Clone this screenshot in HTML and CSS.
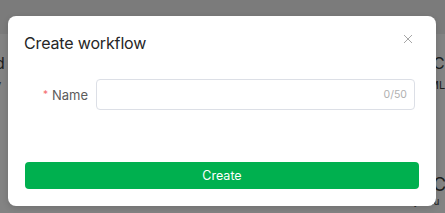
FILE: index.html
```html
<!DOCTYPE html>
<html>
<head>
<meta charset="utf-8">
<link rel="stylesheet" href="styles.css">
</head>
<body>
<div class="page">
  <div class="topbar"></div>
  <div class="content">
    <div class="col col-left">
      <div class="bg-title">d</div>
      <div class="bg-sub">y</div>
    </div>
    <div class="col col-right">
      <div class="bg-title">C</div>
      <div class="bg-sub">ML</div>
      <div class="bg-title big">C</div>
      <div class="bg-edited">Edited by:&nbsp; hu</div>
    </div>
  </div>
</div>
<div class="modal">
  <div class="modal-header">
    <div class="modal-title">Create workflow</div>
    <svg class="close" width="10" height="10" viewBox="0 0 10 10"><path d="M1 1L9 9M9 1L1 9" stroke="#a6a6a6" stroke-width="1" fill="none"/></svg>
  </div>
  <div class="form-row">
    <label class="label"><span class="req">*</span>Name</label>
    <div class="input">
      <span class="count">0/50</span>
    </div>
  </div>
  <button class="btn">Create</button>
</div>
</body>
</html>
```
FILE: styles.css
```css
html, body {
  margin: 0;
  padding: 0;
}
body {
  width: 445px;
  height: 213px;
  overflow: hidden;
  position: relative;
  background: #838383;
  font-family: Inter, "Liberation Sans", sans-serif;
}
.page {
  display: flex;
  flex-direction: column;
  height: 213px;
}
.topbar {
  height: 34px;
  background: #7b7b7b;
}
.content {
  flex: 1;
  display: flex;
  justify-content: space-between;
  color: #1e1e1e;
}
.col-left {
  padding-top: 20px;
  margin-left: -5px;
}
.col-right {
  padding-top: 20px;
  width: 10px;
  overflow: visible;
  margin-right: 0;
  white-space: nowrap;
  position: relative;
}
.bg-title {
  font-size: 16px;
  line-height: 18px;
}
.bg-sub {
  font-size: 11px;
  line-height: 14px;
  margin-top: 6px;
}
.col-right .bg-title {
  margin-left: -2px;
}
.col-right .bg-sub {
  margin-left: -6px;
}
.big {
  margin-top: 84px;
  font-size: 18px;
}
.col-right .bg-edited {
  font-size: 10px;
  line-height: 12px;
  margin-left: -60px;
  margin-top: 1px;
  color: #222;
}
.modal {
  position: absolute;
  left: 8px;
  top: 16px;
  width: 428px;
  height: 190px;
  box-sizing: border-box;
  background: #fff;
  border-radius: 8px;
  padding: 0 17px;
  display: flex;
  flex-direction: column;
  box-shadow: 0 2px 6px rgba(0,0,0,0.15);
}
.modal-header {
  display: flex;
  justify-content: space-between;
  align-items: center;
  height: 52px;
  padding-top: 1px;
  box-sizing: border-box;
}
.modal-title {
  font-size: 16px;
  color: #262626;
  margin-left: -1px;
  letter-spacing: -0.15px;
}
.close {
  margin-right: 6px;
  margin-top: -7px;
}
.form-row {
  display: flex;
  align-items: center;
  margin-top: 11px;
  margin-right: 4px;
}
.label {
  width: 63px;
  text-align: right;
  font-size: 13px;
  color: #5c5c5c;
  padding-right: 8px;
}
.req {
  color: #f56c6c;
  font-size: 10px;
  margin-right: 4px;
  position: relative;
  top: -2px;
}
.input {
  flex: 1;
  height: 31px;
  box-sizing: border-box;
  border: 1px solid #dcdfe6;
  border-radius: 4px;
  display: flex;
  align-items: center;
  justify-content: flex-end;
  padding-right: 7px;
}
.count {
  font-size: 10.5px;
  color: #b0b0b0;
}
.btn {
  margin-top: 52px;
  height: 27px;
  border: none;
  border-radius: 4px;
  background: #00b04f;
  color: #fff;
  font-family: Inter, "Liberation Sans", sans-serif;
  font-size: 12.5px;
  padding: 0;
}
```
